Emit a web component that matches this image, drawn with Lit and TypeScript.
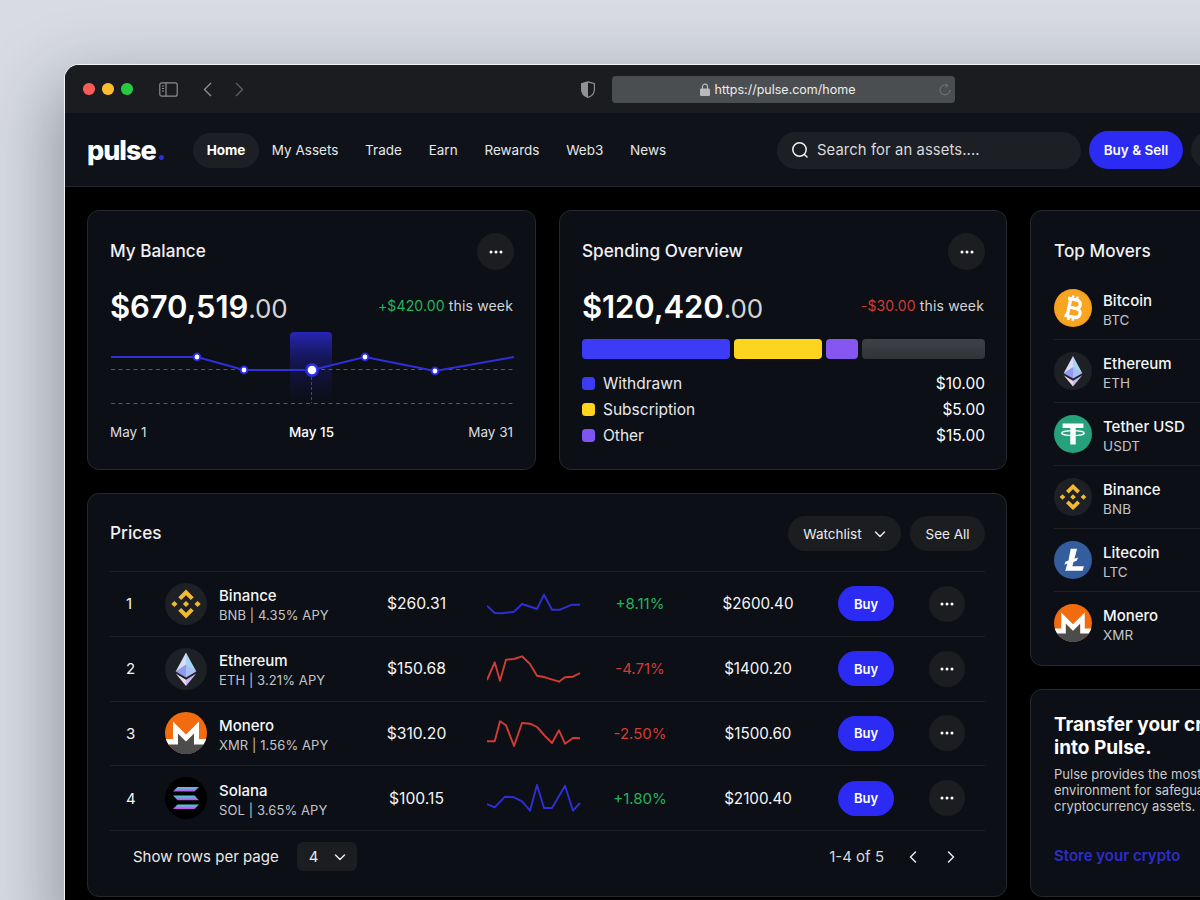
import { LitElement, html, css, svg } from "lit";
import { customElement } from "lit/decorators.js";

type Kind = "btc" | "eth" | "usdt" | "bnb" | "ltc" | "xmr" | "sol";

const coinArt: Record<Kind, unknown> = {
  btc: svg`<circle cx="21" cy="21" r="21" fill="#f7a11e"/><circle cx="21" cy="21" r="18.5" fill="#f9a825" opacity=".6"/>
    <g transform="rotate(12 21 21)" fill="none" stroke="#fff" stroke-width="3.6">
      <path d="M13.5 11.5H23.5a4.6 4.6 0 0 1 0 9.3H16.5M16.5 20.8H25a5 5 0 0 1 0 10H13.5M16.5 11.5V30.8"/>
      <path stroke-width="2.8" d="M18.5 7.5V11.5M23.5 7.5V11.5M18.5 30.8V35M23.5 30.8V35"/>
    </g>`,
  eth: svg`<circle cx="21" cy="21" r="21" fill="#1d2025"/>
    <path d="M21 4.5V19L10.7 23.4Z" fill="#d9dcf6"/><path d="M21 4.5V19L31.3 23.4Z" fill="#a6d6ee"/>
    <path d="M21 16.5L10.7 23.4 21 29.4Z" fill="#8f9af0"/><path d="M21 16.5L31.3 23.4 21 29.4Z" fill="#a9c0f5"/>
    <path d="M10.7 25.6L21 31.7V38Z" fill="#f0d9e6"/><path d="M31.3 25.6L21 31.7V38Z" fill="#c9b9f2"/>`,
  usdt: svg`<circle cx="21" cy="21" r="21" fill="#26a17b"/>
    <path fill="#fff" d="M9.5 9.5H32.5V14.5H24V32.5H18V14.5H9.5Z"/>
    <ellipse cx="21" cy="20" rx="12.5" ry="2.8" fill="none" stroke="#fff" stroke-width="1.4"/>`,
  bnb: svg`<circle cx="21" cy="21" r="21" fill="#1d2025"/>
    <g fill="#f3ba2f">
      <path d="M21 6.5L28.7 14.2 25.8 17.1 21 12.3 16.2 17.1 13.3 14.2Z"/>
      <path d="M21 35.5L28.7 27.8 25.8 24.9 21 29.7 16.2 24.9 13.3 27.8Z"/>
      <path d="M21 17.9L24.1 21 21 24.1 17.9 21Z"/>
      <path d="M9.4 17.9L12.5 21 9.4 24.1 6.3 21Z"/>
      <path d="M32.6 17.9L35.7 21 32.6 24.1 29.5 21Z"/>
    </g>`,
  ltc: svg`<circle cx="21" cy="21" r="21" fill="#345d9d"/>
    <path fill="#fff" d="M18.5 8.5H25.5L22.6 19.6 26.5 18.1 25.3 21.6 21.5 23.1 20.3 27.8H33L31.6 33H12.4L14.8 24.9 11.5 26.2 12.6 22.9 16 21.5Z"/>`,
  xmr: svg`<defs><clipPath id="xc"><circle cx="21" cy="21" r="21"/></clipPath></defs>
    <g clip-path="url(#xc)">
      <rect width="42" height="42" fill="#f26b0f"/>
      <path fill="#4c4c4c" d="M0 32H13V21.5L21 29.5 29 21.5V32H42V42H0Z"/>
      <path fill="#fff" d="M8 9.5L21 22.5 34 9.5V27H42V32.5H29V21.5L21 29.5 13 21.5V32.5H0V27H8Z"/>
    </g>`,
  sol: svg`<defs><linearGradient id="s1" x1="0" y1="0" x2="0" y2="1"><stop offset="0" stop-color="#2fe0b0"/><stop offset=".5" stop-color="#8a8fe8"/><stop offset="1" stop-color="#d045f0"/></linearGradient></defs>
    <circle cx="21" cy="21" r="21" fill="#000"/>
    <g fill="url(#s1)"><path d="M12.5 10H34L29.5 14.6H8Z"/><path d="M8 18.6H29.5L34 23.2H12.5Z"/><path d="M12.5 27.4H34L29.5 32H8Z"/></g>`,
};

const coin = (k: Kind, cls: string) => html`<svg class=${cls} viewBox="0 0 42 42">${coinArt[k]}</svg>`;

const dots = html`<button class="more"><svg viewBox="0 0 14 4" width="14" height="4"><circle cx="2" cy="2" r="1.5"/><circle cx="7" cy="2" r="1.5"/><circle cx="12" cy="2" r="1.5"/></svg></button>`;
const chevD = html`<svg class="ic" viewBox="0 0 12 12" width="12" height="12"><path d="M1.5 4L6 8.5 10.5 4"/></svg>`;

const prices = [
  { n: 1, k: "bnb" as Kind, name: "Binance", sym: "BNB", apy: "4.35% APY", price: "$260.31", up: true, pct: "+8.11%", total: "$2600.40",
    line: "0,21.7 7.7,29 15,29.3 27,27.7 35,20 50,25 57,10.7 65,25.7 73,25.7 85,20.7 93,20.7" },
  { n: 2, k: "eth" as Kind, name: "Ethereum", sym: "ETH", apy: "3.21% APY", price: "$150.68", up: false, pct: "-4.71%", total: "$1400.20",
    line: "0,31 7.7,13.3 13,31.7 19,10.7 27,10 35,7.3 43,15 50,26.7 58,28.3 72,32.7 78,28.3 86,27.7 93,24" },
  { n: 3, k: "xmr" as Kind, name: "Monero", sym: "XMR", apy: "1.56% APY", price: "$310.20", up: false, pct: "-2.50%", total: "$1500.60",
    line: "0,28.3 7.7,28.3 13,8.3 19,12.3 27,33 35,10 43,10.7 50,14 58,23 65,30 72,17.3 78,30.7 86,25 93,25.3" },
  { n: 4, k: "sol" as Kind, name: "Solana", sym: "SOL", apy: "3.65% APY", price: "$100.15", up: true, pct: "+1.80%", total: "$2100.40",
    line: "0,26 7.7,29.3 18,18.7 27,19.3 35,23.3 43,32.7 50,7 57,30 65,30 78,7.7 86,32.7 93,25" },
];

const movers: { k: Kind; name: string; sym: string }[] = [
  { k: "btc", name: "Bitcoin", sym: "BTC" },
  { k: "eth", name: "Ethereum", sym: "ETH" },
  { k: "usdt", name: "Tether USD", sym: "USDT" },
  { k: "bnb", name: "Binance", sym: "BNB" },
  { k: "ltc", name: "Litecoin", sym: "LTC" },
  { k: "xmr", name: "Monero", sym: "XMR" },
];

@customElement("app-root")
export class AppRoot extends LitElement {
  static styles = css`
    :host { display: block; width: 1200px; height: 900px; overflow: hidden; font-family: Inter, "Liberation Sans", sans-serif; color: #f4f5f6;
      background: #d8dbe3; }
    * { box-sizing: border-box; }
    button { font: inherit; color: inherit; border: 0; padding: 0; }
    .desk { padding: 65px 0 0 65px; height: 900px; overflow: hidden; }
    .window { width: 1400px; border-radius: 14px 14px 0 0; overflow: hidden; background: #000;
      box-shadow: 0 0 0 1px #f2f3f6, 0 30px 70px 12px rgba(40, 44, 60, .38); }

    .chrome { height: 48px; background: #1b1c20; display: flex; align-items: center; padding-left: 18px; }
    .light { width: 11.5px; height: 11.5px; border-radius: 50%; margin-right: 7.5px; }
    .r { background: #fc5b57; } .y { background: #fdbc2e; } .g { background: #28c940; }
    .side { margin-left: 19px; }
    .back { margin-left: 25px; }
    .fwd { margin-left: 23px; }
    .shield { margin-left: 337px; }
    .url { margin-left: 17px; width: 343px; height: 27px; border-radius: 4px; background: #4b4e51; display: flex; align-items: center; justify-content: center; position: relative; font-size: 12.5px; gap: 5px; color: #eceded; padding-right: 12px; }
    .reload { position: absolute; right: 4px; top: 7px; }

    .nav { height: 74px; padding-top: 1px; background: #0f1218; border-bottom: 1px solid #24272c; display: flex; align-items: center; padding-left: 22px; }
    .logo { font-size: 27px; font-weight: 800; letter-spacing: -1px; width: 106px; color: #fff; line-height: 1; }
    .logo span { color: #2d2be0; margin-left: 1px; }
    .links { display: flex; align-items: center; gap: 26.8px; font-size: 13.5px; color: #e6e7e9; width: 584px; }
    .links a.on { background: #1c1f24; height: 35px; width: 66px; border-radius: 18px; display: flex; align-items: center; justify-content: center; font-weight: 700; color: #fff; margin-right: -14px; }
    .search { width: 304px; height: 37px; border-radius: 19px; background: #1c1f24; display: flex; align-items: center; padding-left: 14px; gap: 8px; font-size: 14.8px; color: #d9dadc; letter-spacing: .1px; }
    .cta { width: 94px; height: 38px; margin-left: 8px; border-radius: 19px; background: #2b2bf3; font-size: 13.5px; font-weight: 600; color: #fff; }
    .ghost { width: 60px; height: 38px; margin-left: 8px; border-radius: 19px; background: #1c1f24; }

    .main { display: grid; grid-template-columns: 920px 340px; gap: 23px; padding: 23px 22px 10px; background: #000; }
    .left, .right { display: flex; flex-direction: column; gap: 23px; }
    .top { display: grid; grid-template-columns: 449px 448px; gap: 23px; }
    .card { background: #0c0f15; border: 1px solid #25282d; border-radius: 12px; }
    .summary { height: 260px; padding: 22px 21px 0 22px; }
    .head { display: flex; align-items: center; justify-content: space-between; height: 37px; }
    h2 { margin: -3px 0 0; font-size: 17.2px; font-weight: 500; color: #f0f1f3; }
    .more { width: 37px; height: 37px; border-radius: 50%; background: #1b1d21; display: flex; align-items: center; justify-content: center; flex: none; }
    .more circle { fill: #fff; }
    .figure { display: flex; justify-content: space-between; align-items: center; margin-top: 16px; height: 40px; }
    .amount { font-size: 31px; font-weight: 600; letter-spacing: -.1px; color: #fff; }
    .amount small { font-size: 26px; font-weight: 400; color: #d3d5d9; }
    .delta { font-size: 14px; letter-spacing: .15px; color: #d3d5d8; margin: -2px 1px 0 0; }
    .plus { color: #22b55d; } .minus { color: #d13c35; }

    .chart { display: block; margin: 4px 0 0 1px; overflow: visible; }
    .dates { display: grid; grid-template-columns: 1fr auto 1fr; font-size: 13.5px; color: #dcdde0; margin: 14px 1px 0 0; }
    .dates b { font-weight: 500; color: #fff; }
    .dates span:last-child { text-align: right; }

    .bar { display: flex; gap: 4px; margin-top: 13px; height: 19.5px; }
    .bar i { display: block; border-radius: 4px; }
    .s1 { width: 148px; background: #3c3cf6; } .s2 { width: 88px; background: #fdd51e; } .s3 { width: 32px; background: #8556f0; }
    .s4 { flex: 1; background: linear-gradient(#3e4145, #303337); }
    .legend { display: grid; grid-auto-rows: 26px; margin-top: 11.5px; font-size: 15.5px; }
    .legend div { display: flex; align-items: center; color: #e8e9eb; }
    .legend u { width: 13px; height: 13px; border-radius: 3.5px; margin-right: 8px; text-decoration: none; }
    .legend span { margin-left: auto; color: #fff; }
    .c1 { background: #3c3cf6; } .c2 { background: #fdd51e; } .c3 { background: #7c55f2; }

    .prices { height: 404px; padding: 21px 21px 0 22px; }
    .actions { display: flex; gap: 9px; }
    .pill { height: 35px; border-radius: 18px; background: #1b1d21; font-size: 13.5px; display: flex; align-items: center; justify-content: center; gap: 12px; color: #eceded; }
    .watch { width: 113px; } .all { width: 75px; }
    .ic { fill: none; stroke: #e8e9ea; stroke-width: 1.5; stroke-linecap: round; stroke-linejoin: round; flex: none; }
    .rows { margin-top: 19px; }
    .row { display: grid; grid-template-columns: 55px 188px 127px 107px 106px 130px 86px 76px; height: 64.75px; align-items: center; border-top: 1px solid #1d2025; font-size: 15px; }
    .num { padding-left: 16px; }
    .coinc { display: flex; align-items: center; gap: 12px; }
    .big { width: 42px; height: 42px; flex: none; }
    .txt { padding-top: 4px; }
    .nm { font-size: 15px; font-weight: 500; line-height: 19px; color: #f5f6f7; }
    .sb { font-size: 13px; line-height: 20px; color: #c3c5c9; letter-spacing: .1px; }
    .ctr { text-align: center; }
    .price { font-size: 15.7px; }
    .total { font-size: 15.2px; }
    .spark { margin-left: 7px; display: block; fill: none; stroke-width: 1.9; stroke-linejoin: round; }
    .spark.up { stroke: #2f2fd6; } .spark.down { stroke: #d13c35; }
    .buy { width: 56px; height: 35px; border-radius: 18px; background: #2b2bf3; font-size: 13px; font-weight: 600; color: #fff; justify-self: center; }
    .row .more { justify-self: center; width: 36px; height: 36px; }
    .foot { border-top: 1px solid #1d2025; height: 52px; padding: 0 30px 0 23px; display: flex; align-items: center; font-size: 15px; color: #e8e9eb; }
    .sel { width: 60px; height: 29px; margin-left: 18px; background: #1b1d21; border-radius: 6px; display: flex; align-items: center; padding-left: 12px; gap: 16px; font-size: 15px; }
    .pages { margin-left: auto; display: flex; align-items: center; color: #d8d9dc; }
    .pages .a { margin-left: 25px; } .pages .b { margin-left: 30px; }

    .moversc { height: 456px; padding: 22px 22px 0 23px; }
    .mlist { margin-top: 6.5px; }
    .m { display: flex; align-items: center; gap: 11px; height: 63px; border-bottom: 1px solid #1d2025; }
    .m:last-child { border-bottom-color: transparent; }
    .m .txt { padding-top: 5px; }
    .mid { width: 38px; height: 38px; flex: none; }
    .m .sb { font-size: 13.5px; }

    .transfer { height: 208px; padding: 23px 22px 0 23px; }
    h3 { margin: 0; font-size: 19px; font-weight: 700; line-height: 23px; color: #fff; white-space: nowrap; }
    .transfer p { margin: 7px 0 0; font-size: 13px; line-height: 16px; color: #c9cbce; white-space: nowrap; }
    .store { display: block; margin-top: 32px; font-size: 15px; font-weight: 600; color: #2d2dc9; }
  `;

  render() {
    return html`<div class="desk"><div class="window">
      <div class="chrome">
        <i class="light r"></i><i class="light y"></i><i class="light g"></i>
        <svg class="side" width="19" height="15" viewBox="0 0 19 15" fill="none" stroke="#8d8e91" stroke-width="1.2"><rect x=".8" y=".8" width="17.4" height="13.4" rx="2"/><path d="M7 1V14"/><path d="M3 4H5M3 6.5H5M3 9H5" /></svg>
        <svg class="back" width="9" height="15" viewBox="0 0 9 15" fill="none" stroke="#8d8e91" stroke-width="1.4"><path d="M8 1L1.5 7.5 8 14"/></svg>
        <svg class="fwd" width="9" height="15" viewBox="0 0 9 15" fill="none" stroke="#5e5f62" stroke-width="1.4"><path d="M1 1L7.5 7.5 1 14"/></svg>
        <svg class="shield" width="14" height="17" viewBox="0 0 14 17"><path d="M7 .8L13.4 2.6V8.4C13.4 12 10.8 15 7 16.4 3.2 15 .6 12 .6 8.4V2.6Z" fill="none" stroke="#8f9193" stroke-width="1.2"/><path d="M7 .8L.6 2.6V8.4C.6 12 3.2 15 7 16.4Z" fill="#8f9193"/></svg>
        <div class="url">
          <svg width="10" height="13" viewBox="0 0 10 13"><path d="M2.5 6V3.6a2.5 2.5 0 0 1 5 0V6" fill="none" stroke="#b9babc" stroke-width="1.2"/><rect y="5.5" width="10" height="7.5" rx="1.2" fill="#b9babc"/></svg>
          <span>https://pulse.com/home</span>
          <svg class="reload" width="12" height="13" viewBox="0 0 12 13" fill="none" stroke="#787a7d" stroke-width="1"><path d="M8.5 2.6A5 5 0 1 0 11 7"/><path d="M6.6 .8L8.8 2.6 6.8 4.6"/></svg>
        </div>
      </div>

      <div class="nav">
        <div class="logo">pulse<span>.</span></div>
        <div class="links">
          <a class="on">Home</a><a>My Assets</a><a>Trade</a><a>Earn</a><a>Rewards</a><a>Web3</a><a>News</a>
        </div>
        <div class="search">
          <svg width="18" height="18" viewBox="0 0 18 18" fill="none" stroke="#f2f3f4" stroke-width="1.5" stroke-linecap="round"><circle cx="8.5" cy="8.5" r="6.7"/><path d="M13.5 13.5L16 16"/></svg>
          <span>Search for an assets....</span>
        </div>
        <button class="cta">Buy &amp; Sell</button>
        <div class="ghost"></div>
      </div>

      <div class="main">
        <div class="left">
          <div class="top">
            <section class="card summary">
              <div class="head"><h2>My Balance</h2>${dots}</div>
              <div class="figure">
                <div class="amount">$670,519<small>.00</small></div>
                <div class="delta"><span class="plus">+$420.00</span> this week</div>
              </div>
              <svg class="chart" width="403" height="80" viewBox="0 0 403 80">
                <defs>
                  <linearGradient id="gl" x1="0" y1="0" x2="0" y2="1"><stop offset="0" stop-color="#2626b8"/><stop offset=".4" stop-color="#1a1a78" stop-opacity=".6"/><stop offset="1" stop-color="#13134f" stop-opacity="0"/></linearGradient>
                </defs>
                <path d="M179 75V6a4 4 0 0 1 4-4H217a4 4 0 0 1 4 4V75Z" fill="url(#gl)"/>
                <g stroke="#56585c" stroke-width="1" stroke-dasharray="4 3.5"><path d="M0 39.5H403M0 73.5H403"/></g>
                <path d="M200.5 42V73" stroke="#3838e0" stroke-width="1" stroke-dasharray="3 2"/>
                <polyline points="0,27 86,27 133,40 201,40 254,27 324,41 403,27" fill="none" stroke="#2f2fdc" stroke-width="2"/>
                <g fill="#fff" stroke="#2a2ae6" stroke-width="2">
                  <circle cx="86" cy="27" r="3.4"/><circle cx="133" cy="40" r="3.4"/><circle cx="254" cy="27" r="3.4"/><circle cx="324" cy="41" r="3.4"/>
                  <circle cx="201" cy="40" r="5.6" stroke-width="2.6"/>
                </g>
              </svg>
              <div class="dates"><span>May 1</span><b>May 15</b><span>May 31</span></div>
            </section>

            <section class="card summary">
              <div class="head"><h2>Spending Overview</h2>${dots}</div>
              <div class="figure">
                <div class="amount">$120,420<small>.00</small></div>
                <div class="delta"><span class="minus">-$30.00</span> this week</div>
              </div>
              <div class="bar"><i class="s1"></i><i class="s2"></i><i class="s3"></i><i class="s4"></i></div>
              <div class="legend">
                <div><u class="c1"></u>Withdrawn<span>$10.00</span></div>
                <div><u class="c2"></u>Subscription<span>$5.00</span></div>
                <div><u class="c3"></u>Other<span>$15.00</span></div>
              </div>
            </section>
          </div>

          <section class="card prices">
            <div class="head"><h2>Prices</h2>
              <div class="actions"><div class="pill watch">Watchlist ${chevD}</div><div class="pill all">See All</div></div>
            </div>
            <div class="rows">
              ${prices.map(p => html`<div class="row">
                <div class="num">${p.n}</div>
                <div class="coinc">${coin(p.k, "big")}<div class="txt"><div class="nm">${p.name}</div><div class="sb">${p.sym} | ${p.apy}</div></div></div>
                <div class="ctr price">${p.price}</div>
                <svg class="spark ${p.up ? "up" : "down"}" width="94" height="40" viewBox="0 0 94 40"><polyline points=${p.line}/></svg>
                <div class="ctr ${p.up ? "plus" : "minus"}">${p.pct}</div>
                <div class="ctr total">${p.total}</div>
                <button class="buy">Buy</button>
                ${dots}
              </div>`)}
            </div>
            <div class="foot">
              <span>Show rows per page</span>
              <div class="sel">4 ${chevD}</div>
              <div class="pages"><span>1-4 of 5</span>
                <svg class="ic a" viewBox="0 0 8 12" width="8" height="12"><path d="M6.5 1L1.5 6l5 5"/></svg>
                <svg class="ic b" viewBox="0 0 8 12" width="8" height="12"><path d="M1.5 1l5 5-5 5"/></svg>
              </div>
            </div>
          </section>
        </div>

        <div class="right">
          <section class="card moversc">
            <div class="head"><h2>Top Movers</h2></div>
            <div class="mlist">
              ${movers.map(m => html`<div class="m">${coin(m.k, "mid")}<div class="txt"><div class="nm">${m.name}</div><div class="sb">${m.sym}</div></div></div>`)}
            </div>
          </section>
          <section class="card transfer">
            <h3>Transfer your crypto<br />into Pulse.</h3>
            <p>Pulse provides the most secure<br />environment for safeguarding your<br />cryptocurrency assets.</p>
            <a class="store">Store your crypto</a>
          </section>
        </div>
      </div>
    </div></div>`;
  }
}
